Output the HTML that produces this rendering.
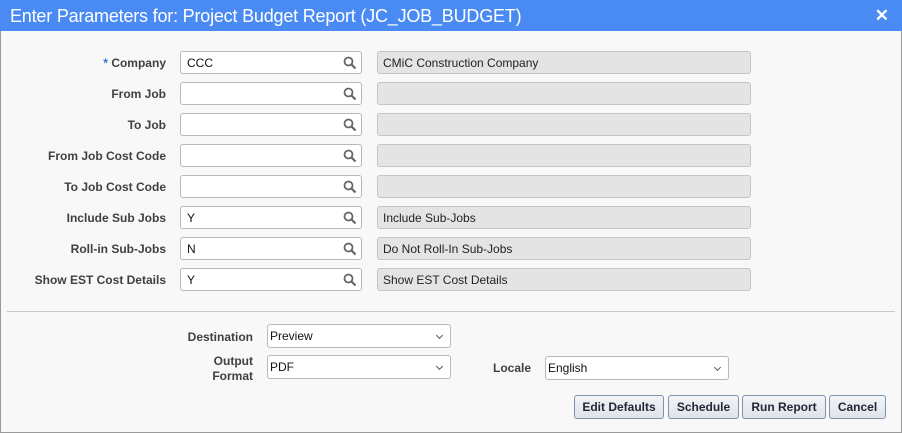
<!DOCTYPE html>
<html><head><style>
*{box-sizing:border-box;margin:0;padding:0}
body{width:902px;height:433px;background:#f8f8f8;font-family:"Liberation Sans",Arial,sans-serif;position:relative;overflow:hidden}
.frame{position:absolute;left:0;top:0;width:902px;height:433px;border:1px solid #9a9a9a;border-top:none}
.title{position:absolute;left:0;top:0;width:902px;height:31px;background:#4a8bf3;color:#fff;font-size:18px;line-height:33px;padding-left:10px;letter-spacing:-0.2px}
.x{position:absolute;right:13px;top:0;color:#fff;font-size:17px;font-weight:bold;line-height:31px}
.lbl{position:absolute;right:736px;font-size:12px;font-weight:bold;color:#404040;text-align:right}
.lbl .s{color:#3070d0}
.in{position:absolute;left:180px;width:182px;height:23px;background:#fff;border:1px solid #b8b8b8;border-radius:3px;font-size:12px;padding-left:6px;line-height:22px;color:#111}
.in svg{position:absolute;right:4px;top:4px}
.disp{position:absolute;left:377px;width:374px;height:23px;background:#e4e4e4;border:1px solid #c4c4c4;border-radius:3px;font-size:12px;padding-left:5px;line-height:22px;color:#222}
.sep{position:absolute;left:7px;top:311px;width:888px;height:1px;background:#c8c8c8}
.sel{position:absolute;height:24px;background:#fff;border:1px solid #b8b8b8;border-radius:3px;font-size:12px;padding-left:2px;line-height:22px;color:#111}
.sel:after{content:"";position:absolute;right:8px;top:8px;width:4px;height:4px;border-right:1px solid #555;border-bottom:1px solid #555;transform:rotate(45deg)}
.bl{position:absolute;font-size:12px;font-weight:bold;color:#404040;text-align:right}
.btn{position:absolute;top:395px;height:24px;background:linear-gradient(#f2f4f7,#dfe3e8);border:1px solid #7f93ab;border-radius:3px;font-size:12px;font-weight:bold;color:#202a36;text-align:center;line-height:22px}
</style></head><body>
<div class="frame"></div>
<div class="title">Enter Parameters for: Project Budget Report (JC_JOB_BUDGET)</div>
<div class="x">✕</div>

<div class="lbl" style="top:56px"><span class="s">* </span>Company</div>
<div class="lbl" style="top:87px">From Job</div>
<div class="lbl" style="top:118px">To Job</div>
<div class="lbl" style="top:149px">From Job Cost Code</div>
<div class="lbl" style="top:180px">To Job Cost Code</div>
<div class="lbl" style="top:211px">Include Sub Jobs</div>
<div class="lbl" style="top:242px">Roll-in Sub-Jobs</div>
<div class="lbl" style="top:273px">Show EST Cost Details</div>

<div class="in" style="top:51px">CCC<svg width="14" height="14" viewBox="0 0 14 14"><circle cx="5.5" cy="5.5" r="4" fill="none" stroke="#666" stroke-width="1.8"/><path d="M8.5 8.5L12.5 12.5" stroke="#666" stroke-width="2.2"/></svg></div>
<div class="in" style="top:82px"><svg width="14" height="14" viewBox="0 0 14 14"><circle cx="5.5" cy="5.5" r="4" fill="none" stroke="#666" stroke-width="1.8"/><path d="M8.5 8.5L12.5 12.5" stroke="#666" stroke-width="2.2"/></svg></div>
<div class="in" style="top:113px"><svg width="14" height="14" viewBox="0 0 14 14"><circle cx="5.5" cy="5.5" r="4" fill="none" stroke="#666" stroke-width="1.8"/><path d="M8.5 8.5L12.5 12.5" stroke="#666" stroke-width="2.2"/></svg></div>
<div class="in" style="top:144px"><svg width="14" height="14" viewBox="0 0 14 14"><circle cx="5.5" cy="5.5" r="4" fill="none" stroke="#666" stroke-width="1.8"/><path d="M8.5 8.5L12.5 12.5" stroke="#666" stroke-width="2.2"/></svg></div>
<div class="in" style="top:175px"><svg width="14" height="14" viewBox="0 0 14 14"><circle cx="5.5" cy="5.5" r="4" fill="none" stroke="#666" stroke-width="1.8"/><path d="M8.5 8.5L12.5 12.5" stroke="#666" stroke-width="2.2"/></svg></div>
<div class="in" style="top:206px">Y<svg width="14" height="14" viewBox="0 0 14 14"><circle cx="5.5" cy="5.5" r="4" fill="none" stroke="#666" stroke-width="1.8"/><path d="M8.5 8.5L12.5 12.5" stroke="#666" stroke-width="2.2"/></svg></div>
<div class="in" style="top:237px">N<svg width="14" height="14" viewBox="0 0 14 14"><circle cx="5.5" cy="5.5" r="4" fill="none" stroke="#666" stroke-width="1.8"/><path d="M8.5 8.5L12.5 12.5" stroke="#666" stroke-width="2.2"/></svg></div>
<div class="in" style="top:268px">Y<svg width="14" height="14" viewBox="0 0 14 14"><circle cx="5.5" cy="5.5" r="4" fill="none" stroke="#666" stroke-width="1.8"/><path d="M8.5 8.5L12.5 12.5" stroke="#666" stroke-width="2.2"/></svg></div>

<div class="disp" style="top:51px">CMiC Construction Company</div>
<div class="disp" style="top:82px"></div>
<div class="disp" style="top:113px"></div>
<div class="disp" style="top:144px"></div>
<div class="disp" style="top:175px"></div>
<div class="disp" style="top:206px">Include Sub-Jobs</div>
<div class="disp" style="top:237px">Do Not Roll-In Sub-Jobs</div>
<div class="disp" style="top:268px">Show EST Cost Details</div>

<div class="sep"></div>

<div class="bl" style="left:170px;width:83px;top:330px">Destination</div>
<div class="sel" style="left:267px;top:324px;width:184px">Preview</div>
<div class="bl" style="left:170px;width:83px;top:354px;line-height:15px">Output<br>Format</div>
<div class="sel" style="left:267px;top:355px;width:184px">PDF</div>
<div class="bl" style="left:493px;top:361px">Locale</div>
<div class="sel" style="left:545px;top:356px;width:184px">English</div>

<div class="btn" style="left:574px;width:90px">Edit Defaults</div>
<div class="btn" style="left:668px;width:71px">Schedule</div>
<div class="btn" style="left:742px;width:84px">Run Report</div>
<div class="btn" style="left:829px;width:57px">Cancel</div>
</body></html>
